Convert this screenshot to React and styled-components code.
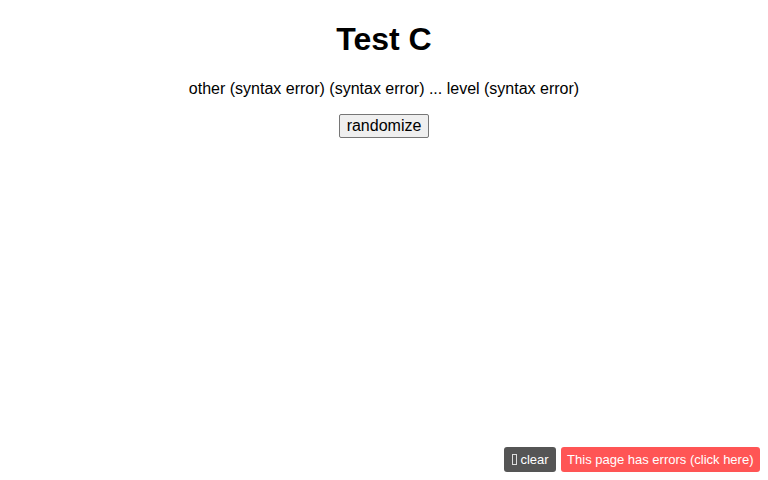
import React from "react";
import styled, { createGlobalStyle } from "styled-components";

const Global = createGlobalStyle`
  body { margin: 0; font-family: "Liberation Sans", Arial, sans-serif; background: #fff; color: #000; }
`;

const Page = styled.div`
  text-align: center;
  padding: 0 8px;
`;

const Title = styled.h1`
  font-size: 32px;
  font-weight: bold;
  margin: 21.44px 0;
`;

const Line = styled.p`
  font-size: 16px;
  margin: 16px 0;
`;

const Button = styled.button`
  font-family: "Liberation Sans", Arial, sans-serif;
  font-size: 16px;
  line-height: 18px;
  padding: 2px 7px;
  border: 1px solid #767676;
  border-radius: 2px;
  background: #efefef;
  color: #000;
`;

const Bar = styled.div`
  position: fixed;
  right: 8px;
  bottom: 8px;
  display: flex;
  gap: 5px;
`;

const Pill = styled.button`
  font-family: "Liberation Sans", Arial, sans-serif;
  font-size: 13px;
  height: 25px;
  padding: 0 ${(p) => (p.$danger ? "6.5px" : "7px")};
  border: none;
  border-radius: 3px;
  color: #fff;
  background: ${(p) => (p.$danger ? "#f55" : "#555")};
  display: flex;
  align-items: center;
`;

const Tofu = styled.span`
  display: inline-block;
  width: 3px;
  height: 9px;
  border: 1px solid #ddd;
  margin: 0 3px 0 1px;
`;

export default function App() {
  return (
    <Page>
      <Global />
      <Title>Test C</Title>
      <Line>other (syntax error) (syntax error) ... level (syntax error)</Line>
      <div>
        <Button>randomize</Button>
      </div>
      <Bar>
        <Pill>
          <Tofu />
          clear
        </Pill>
        <Pill $danger>This page has errors (click here)</Pill>
      </Bar>
    </Page>
  );
}
